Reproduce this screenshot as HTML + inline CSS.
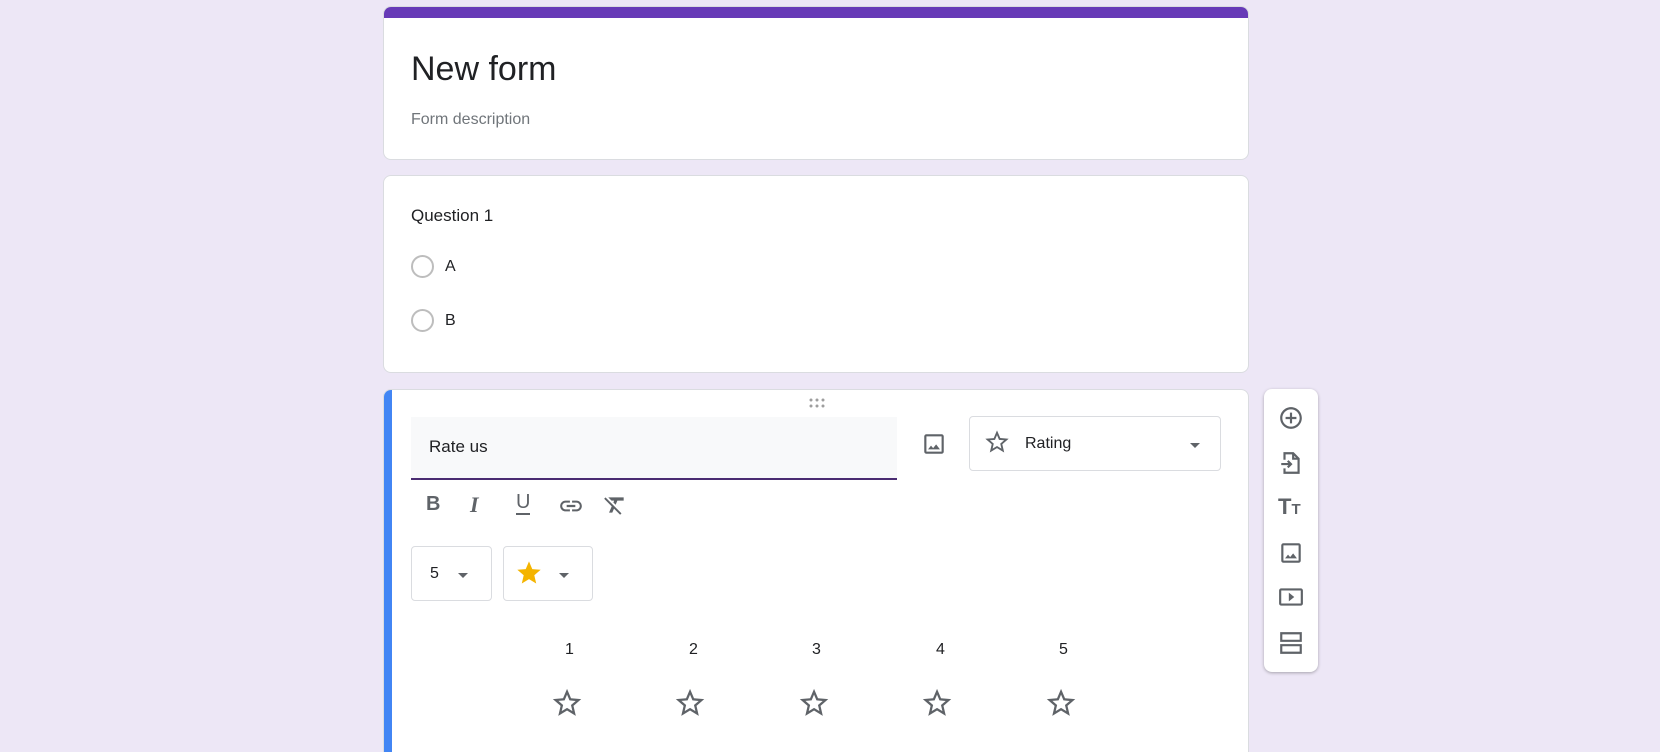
<!DOCTYPE html>
<html style="overflow:hidden;height:752px"><head><meta charset="utf-8"><style>
body{margin:0;width:1660px;height:752px;overflow:hidden;background:#ede7f6;font-family:"Liberation Sans",Roboto,sans-serif;color:#202124;position:relative}
.card{position:absolute;left:383px;width:866px;background:#fff;border:1px solid #dadce0;border-radius:8px;box-sizing:border-box}
.abs{position:absolute}
svg.i{position:absolute}
</style></head><body>
<div class="card" style="top:6px;height:154px;overflow:hidden">
  <div class="abs" style="left:0;top:0;width:100%;height:11px;background:#673ab7"></div>
  <div class="abs" style="left:27px;top:43px;font-size:34px">New form</div>
  <div class="abs" style="left:27px;top:104px;font-size:16px;color:#70757a">Form description</div>
</div>
<div class="card" style="top:175px;height:198px">
  <div class="abs" style="left:27px;top:30px;font-size:17px">Question 1</div>
  <div class="abs" style="left:27px;top:79px;width:19px;height:19px;border:2px solid #bdbdbd;border-radius:50%"></div>
  <div class="abs" style="left:61px;top:82px;font-size:16px">A</div>
  <div class="abs" style="left:27px;top:133px;width:19px;height:19px;border:2px solid #bdbdbd;border-radius:50%"></div>
  <div class="abs" style="left:61px;top:136px;font-size:16px">B</div>
</div>
<div class="card" style="top:389px;height:363px;overflow:hidden;border-bottom:none;border-radius:8px 8px 0 0">
  <div class="abs" style="left:0;top:0;width:8px;height:100%;background:#4285f4"></div>
  <svg class="i" style="left:424px;top:7px" width="18" height="12"><g fill="#9e9e9e"><circle cx="3" cy="3" r="1.5"/><circle cx="9" cy="3" r="1.5"/><circle cx="15" cy="3" r="1.5"/><circle cx="3" cy="9" r="1.5"/><circle cx="9" cy="9" r="1.5"/><circle cx="15" cy="9" r="1.5"/></g></svg>
  <div class="abs" style="left:27px;top:27px;width:486px;height:63px;background:#f8f9fa;border-bottom:2px solid #4a2c72;box-sizing:border-box"></div>
  <div class="abs" style="left:45px;top:47px;font-size:17px">Rate us</div>
  <svg class="i" style="left:537px;top:41px" width="26" height="26" viewBox="0 0 24 24"><path fill="#5f6368" d="M19 3H5a2 2 0 0 0-2 2v14a2 2 0 0 0 2 2h14a2 2 0 0 0 2-2V5a2 2 0 0 0-2-2zm0 16H5V5h14v14zm-5.04-6.71-2.75 3.54-1.96-2.36L6.5 17h11l-3.54-4.71z"/></svg>
  <div class="abs" style="left:585px;top:26px;width:252px;height:55px;border:1px solid #dadce0;border-radius:4px;box-sizing:border-box"></div>
  <svg class="i" style="left:599px;top:38px" width="28" height="28" viewBox="0 0 24 24"><path fill="#5f6368" d="M22 9.24l-7.19-.62L12 2 9.19 8.63 2 9.24l5.46 4.73L5.82 21 12 17.27 18.18 21l-1.63-7.03L22 9.24zM12 15.4l-3.76 2.27 1-4.28-3.32-2.88 4.38-.38L12 6.1l1.71 4.04 4.38.38-3.32 2.88 1 4.28L12 15.4z"/></svg>
  <div class="abs" style="left:641px;top:45px;font-size:16px">Rating</div>
  <div class="abs" style="left:806px;top:53px;border-left:5px solid transparent;border-right:5px solid transparent;border-top:5px solid #5f6368"></div>
  <div class="abs" style="left:42px;top:103px;font-size:20px;font-weight:bold;color:#5f6368">B</div>
  <div class="abs" style="left:86px;top:102px;font-size:22px;font-weight:bold;font-style:italic;font-family:'Liberation Serif',serif;color:#5f6368">I</div>
  <div class="abs" style="left:132px;top:101px;font-size:20px;color:#5f6368;border-bottom:2px solid #5f6368;line-height:22px">U</div>
  <svg class="i" style="left:174px;top:103px" width="26" height="26" viewBox="0 0 24 24"><path fill="#5f6368" d="M3.9 12c0-1.71 1.39-3.1 3.1-3.1h4V7H7c-2.76 0-5 2.24-5 5s2.24 5 5 5h4v-1.9H7c-1.71 0-3.1-1.39-3.1-3.1zM8 13h8v-2H8v2zm9-6h-4v1.9h4c1.71 0 3.1 1.39 3.1 3.1s-1.39 3.1-3.1 3.1h-4V17h4c2.76 0 5-2.24 5-5s-2.24-5-5-5z"/></svg>
  <svg class="i" style="left:218px;top:102px" width="26" height="26" viewBox="0 0 24 24"><path fill="#5f6368" d="M3.27 5 2 6.27l6.97 6.97L6.5 19h3l1.57-3.66L16.73 21 18 19.73 3.55 5.27 3.27 5zM6 5v.18L8.82 8h2.4l-.72 1.68 2.1 2.1L14.21 8H20V5H6z"/></svg>
  <div class="abs" style="left:27px;top:156px;width:81px;height:55px;border:1px solid #dadce0;border-radius:4px;box-sizing:border-box"></div>
  <div class="abs" style="left:46px;top:175px;font-size:16px">5</div>
  <div class="abs" style="left:74px;top:183px;border-left:5px solid transparent;border-right:5px solid transparent;border-top:5px solid #5f6368"></div>
  <div class="abs" style="left:119px;top:156px;width:90px;height:55px;border:1px solid #dadce0;border-radius:4px;box-sizing:border-box"></div>
  <svg class="i" style="left:131px;top:169px" width="28" height="28" viewBox="0 0 24 24"><path fill="#f4b400" d="M12 17.27 18.18 21l-1.64-7.03L22 9.24l-7.19-.61L12 2 9.19 8.63 2 9.24l5.46 4.73L5.82 21z"/></svg>
  <div class="abs" style="left:175px;top:183px;border-left:5px solid transparent;border-right:5px solid transparent;border-top:5px solid #5f6368"></div>
  <div class="abs" style="left:181px;top:251px;width:750px;font-size:16px;color:#202124">
    <span class="abs" style="left:0;width:12px">1</span>
    <span class="abs" style="left:124px">2</span>
    <span class="abs" style="left:247px">3</span>
    <span class="abs" style="left:371px">4</span>
    <span class="abs" style="left:494px">5</span>
  </div>
  <svg class="i" style="left:166px;top:296px" width="540" height="36" viewBox="0 0 540 36">
    <defs><path id="s" fill="#5f6368" transform="scale(1.42)" d="M22 9.24l-7.19-.62L12 2 9.19 8.63 2 9.24l5.46 4.73L5.82 21 12 17.27 18.18 21l-1.63-7.03L22 9.24zM12 15.4l-3.76 2.27 1-4.28-3.32-2.88 4.38-.38L12 6.1l1.71 4.04 4.38.38-3.32 2.88 1 4.28L12 15.4z"/></defs>
    <use href="#s" x="0"/><use href="#s" x="123"/><use href="#s" x="247"/><use href="#s" x="370"/><use href="#s" x="494"/>
  </svg>
</div>
<div class="abs" style="left:1264px;top:389px;width:54px;height:283px;background:#fff;border-radius:8px;box-shadow:0 1px 3px rgba(0,0,0,.3)">
  <svg class="i" style="left:14px;top:16px" width="26" height="26" viewBox="0 0 24 24"><path fill="#5f6368" d="M13 7h-2v4H7v2h4v4h2v-4h4v-2h-4V7zm-1-5C6.48 2 2 6.48 2 12s4.48 10 10 10 10-4.48 10-10S17.52 2 12 2zm0 18c-4.41 0-8-3.59-8-8s3.59-8 8-8 8 3.59 8 8-3.59 8-8 8z"/></svg>
  <svg class="i" style="left:14px;top:61px" width="26" height="26" viewBox="0 0 24 24"><path fill="none" stroke="#5f6368" stroke-width="2" d="M6 9V3h8l5 5v13H6v-4M14 3v5h5M3 13h9M9 10l3 3-3 3"/></svg>
  <div class="abs" style="left:14px;top:106px;font-weight:bold;color:#5f6368;font-size:22px;line-height:24px">T<span style="font-size:15px">T</span></div>
  <svg class="i" style="left:14px;top:151px" width="26" height="26" viewBox="0 0 24 24"><path fill="#5f6368" d="M19 3H5a2 2 0 0 0-2 2v14a2 2 0 0 0 2 2h14a2 2 0 0 0 2-2V5a2 2 0 0 0-2-2zm0 16H5V5h14v14zm-5.04-6.71-2.75 3.54-1.96-2.36L6.5 17h11l-3.54-4.71z"/></svg>
  <svg class="i" style="left:14px;top:195px" width="26" height="26" viewBox="0 0 24 24"><path fill="#5f6368" d="M21 4H3a2 2 0 0 0-2 2v12a2 2 0 0 0 2 2h18a2 2 0 0 0 2-2V6a2 2 0 0 0-2-2zm0 14H3V6h18v12zM10 8v8l5-4z"/></svg>
  <svg class="i" style="left:14px;top:241px" width="26" height="26" viewBox="0 0 24 24"><path fill="none" stroke="#5f6368" stroke-width="2" d="M3 3h18v7H3zM3 14h18v7H3z"/></svg>
</div>
</body></html>
